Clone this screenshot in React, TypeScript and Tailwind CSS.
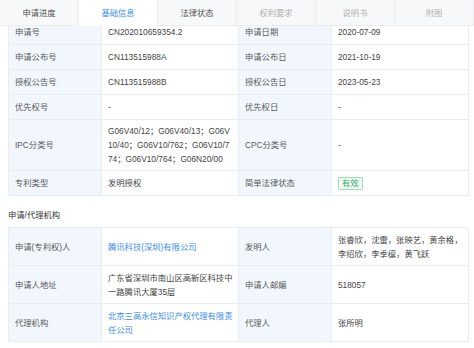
import React from "react";

const font = {
  fontFamily: '"Liberation Sans", "Noto Sans CJK SC", sans-serif',
};

type Cell = { label: string; value: React.ReactNode };

function Lines({ lines, className = "" }: { lines: string[]; className?: string }) {
  return (
    <div className={className}>
      {lines.map((l, i) => (
        <div key={i} className="whitespace-nowrap">
          {l}
        </div>
      ))}
    </div>
  );
}

function Row({ left, right, py = "py-[5px]" }: { left: Cell; right: Cell; py?: string }) {
  const label = `bg-[#f1f7fd] text-[#5a5a5a] border-r border-b border-[#e8edf2] px-[6px] flex items-center ${py}`;
  const val = `bg-white text-[#444] border-r border-b border-[#e8edf2] px-[6px] flex items-center ${py}`;
  return (
    <>
      <div className={label}>{left.label}</div>
      <div className={val}>{left.value}</div>
      <div className={label}>{right.label}</div>
      <div className={val}>{right.value}</div>
    </>
  );
}

export default function App() {
  const tabs = [
    { t: "申请进度", c: "text-[#555]" },
    { t: "基础信息", c: "text-[#3a8ee8]", active: true },
    { t: "法律状态", c: "text-[#555]" },
    { t: "权利要求", c: "text-[#b0b0b0]" },
    { t: "说明书", c: "text-[#b0b0b0]" },
    { t: "附图", c: "text-[#b0b0b0]" },
  ];
  return (
    <div
      className="w-[474px] h-[348px] overflow-hidden bg-white text-[8.3px] leading-[14px]"
      style={font}
    >
      <div className="relative z-10 flex h-[26px] bg-[#f7f8f9]">
        {tabs.map((tab) => (
          <div
            key={tab.t}
            className={`flex-1 flex items-center justify-center border-r border-[#ededed] ${
              tab.active ? "bg-white" : "border-b"
            } ${tab.c}`}
          >
            {tab.t}
          </div>
        ))}
      </div>

      <div className="-mt-[7px] ml-[8px] w-[460px] grid grid-cols-[93px_137px_93px_137px] border-l border-t border-[#e8edf2]">
        <Row
          left={{ label: "申请号", value: "CN202010659354.2" }}
          right={{ label: "申请日期", value: "2020-07-09" }}
        />
        <Row
          left={{ label: "申请公布号", value: "CN113515988A" }}
          right={{ label: "申请公布日", value: "2021-10-19" }}
        />
        <Row
          left={{ label: "授权公告号", value: "CN113515988B" }}
          right={{ label: "授权公告日", value: "2023-05-23" }}
        />
        <Row
          left={{ label: "优先权号", value: "-" }}
          right={{ label: "优先权日", value: "-" }}
        />
        <Row
          py="py-[4px]"
          left={{
            label: "IPC分类号",
            value: (
              <Lines
                lines={[
                  "G06V40/12；G06V40/13；G06V",
                  "10/40；G06V10/762；G06V10/7",
                  "74；G06V10/764；G06N20/00",
                ]}
              />
            ),
          }}
          right={{ label: "CPC分类号", value: "-" }}
        />
        <Row
          left={{ label: "专利类型", value: "发明授权" }}
          right={{
            label: "简单法律状态",
            value: (
              <span className="inline-flex items-center h-[13px] px-[3px] border border-[#a3dcb8] bg-[#eef9f2] text-[#3aae6a] rounded-[1px] leading-[11px]">
                有效
              </span>
            ),
          }}
        />
      </div>

      <div className="pl-[8px] pt-[12px] pb-[5px] text-[#333]">申请/代理机构</div>

      <div className="ml-[8px] w-[460px] grid grid-cols-[93px_137px_93px_137px] border-l border-t border-[#e8edf2]">
        <Row
          py="py-[4.5px]"
          left={{
            label: "申请(专利权)人",
            value: <span className="text-[#3a8ee8]">腾讯科技(深圳)有限公司</span>,
          }}
          right={{
            label: "发明人",
            value: <Lines lines={["张睿欣，沈雷，张映艺，黄余格，", "李绍欣，李季檩，黄飞跃"]} />,
          }}
        />
        <Row
          py="py-[4.5px]"
          left={{
            label: "申请人地址",
            value: <Lines lines={["广东省深圳市南山区高新区科技中", "一路腾讯大厦35层"]} />,
          }}
          right={{ label: "申请人邮编", value: "518057" }}
        />
        <Row
          py="py-[4.5px]"
          left={{
            label: "代理机构",
            value: (
              <Lines
                className="text-[#3a8ee8]"
                lines={["北京三高永信知识产权代理有限责", "任公司"]}
              />
            ),
          }}
          right={{ label: "代理人", value: "张所明" }}
        />
      </div>
    </div>
  );
}
